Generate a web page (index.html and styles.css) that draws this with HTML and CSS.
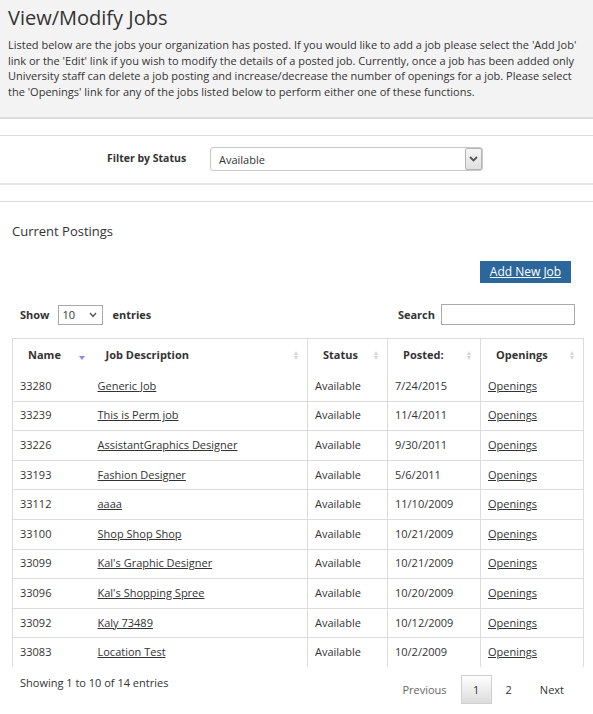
FILE: index.html
```html
<!DOCTYPE html>
<html>
<head>
<meta charset="utf-8">
<link rel="stylesheet" href="styles.css">
</head>
<body>
<header class="page-header">
  <h1 class="title">View/Modify Jobs</h1>
  <p class="intro">Listed below are the jobs your organization has posted. If you would like to add a job please select the 'Add Job' link or the 'Edit' link if you wish to modify the details of a posted job. Currently, once a job has been added only University staff can delete a job posting and increase/decrease the number of openings for a job. Please select the 'Openings' link for any of the jobs listed below to perform either one of these functions.</p>
</header>

<section class="filter">
  <label class="filter-label">Filter by Status</label>
  <div class="select">
    <span class="select-value">Available</span>
    <span class="select-arrow"><svg width="9" height="6" viewBox="0 0 9 6"><path d="M1 1 L4.5 4.5 L8 1" fill="none" stroke="#555" stroke-width="1.8"/></svg></span>
  </div>
</section>

<div class="divider"></div>

<h2 class="postings-title">Current Postings</h2>

<div class="actions">
  <a class="btn-primary" href="#">Add New Job</a>
</div>

<div class="table-controls">
  <div class="length">
    <span class="ctl-label">Show</span>
    <div class="mini-select"><span>10</span><svg width="8" height="6" viewBox="0 0 8 6"><path d="M1 1 L4 4.5 L7 1" fill="none" stroke="#555" stroke-width="1.4"/></svg></div>
    <span class="ctl-label">entries</span>
  </div>
  <div class="search">
    <span class="ctl-label">Search</span>
    <div class="search-input"></div>
  </div>
</div>

<table class="jobs">
  <thead>
    <tr>
      <th class="c-name">Name<span class="sort-active"></span></th>
      <th class="c-desc">Job Description<span class="sort"></span></th>
      <th class="c-status sep">Status<span class="sort"></span></th>
      <th class="c-posted sep">Posted:<span class="sort"></span></th>
      <th class="c-open sep">Openings<span class="sort"></span></th>
    </tr>
  </thead>
  <tbody>
    <tr><td>33280</td><td><a href="#">Generic Job</a></td><td class="sep">Available</td><td class="sep">7/24/2015</td><td class="sep"><a href="#">Openings</a></td></tr>
    <tr><td>33239</td><td><a href="#">This is Perm job</a></td><td class="sep">Available</td><td class="sep">11/4/2011</td><td class="sep"><a href="#">Openings</a></td></tr>
    <tr><td>33226</td><td><a href="#">AssistantGraphics Designer</a></td><td class="sep">Available</td><td class="sep">9/30/2011</td><td class="sep"><a href="#">Openings</a></td></tr>
    <tr><td>33193</td><td><a href="#">Fashion Designer</a></td><td class="sep">Available</td><td class="sep">5/6/2011</td><td class="sep"><a href="#">Openings</a></td></tr>
    <tr><td>33112</td><td><a href="#">aaaa</a></td><td class="sep">Available</td><td class="sep">11/10/2009</td><td class="sep"><a href="#">Openings</a></td></tr>
    <tr><td>33100</td><td><a href="#">Shop Shop Shop</a></td><td class="sep">Available</td><td class="sep">10/21/2009</td><td class="sep"><a href="#">Openings</a></td></tr>
    <tr><td>33099</td><td><a href="#">Kal's Graphic Designer</a></td><td class="sep">Available</td><td class="sep">10/21/2009</td><td class="sep"><a href="#">Openings</a></td></tr>
    <tr><td>33096</td><td><a href="#">Kal's Shopping Spree</a></td><td class="sep">Available</td><td class="sep">10/20/2009</td><td class="sep"><a href="#">Openings</a></td></tr>
    <tr><td>33092</td><td><a href="#">Kaly 73489</a></td><td class="sep">Available</td><td class="sep">10/12/2009</td><td class="sep"><a href="#">Openings</a></td></tr>
    <tr><td>33083</td><td><a href="#">Location Test</a></td><td class="sep">Available</td><td class="sep">10/2/2009</td><td class="sep"><a href="#">Openings</a></td></tr>
  </tbody>
</table>

<div class="table-footer">
  <div class="info">Showing 1 to 10 of 14 entries</div>
  <div class="pager">
    <span class="page-link muted">Previous</span>
    <span class="page-link current">1</span>
    <span class="page-link">2</span>
    <span class="page-link">Next</span>
  </div>
</div>
</body>
</html>
```

FILE: styles.css
```css
* { box-sizing: border-box; }
html, body { margin: 0; padding: 0; background: #fff; }
body {
  font-family: "Open Sans", "DejaVu Sans", sans-serif;
  font-size: 11px;
  color: #333;
}
a { color: #333; }

.page-header {
  background: #f3f3f3;
  padding: 4px 8px 0;
  height: 119px;
  border-bottom: 2px solid #dcdcdc;
}
.title {
  margin: 0;
  font-size: 20px;
  font-weight: 400;
  line-height: 28px;
  color: #333;
}
.intro {
  margin: 5px 0 0;
  font-size: 11px;
  line-height: 15.7px;
}

.filter {
  margin-top: 16px;
  border-top: 1px solid #dcdcdc;
  border-bottom: 2px solid #e4e4e4;
  height: 50px;
  display: flex;
  align-items: center;
  padding-left: 107px;
}
.filter-label {
  font-weight: 700;
  font-size: 10.5px;
  width: 103px;
  margin-top: -4px;
}
.select {
  width: 273px;
  height: 24px;
  border: 1px solid #c8c8c8;
  border-radius: 3px;
  display: flex;
  align-items: center;
  justify-content: space-between;
  padding-left: 8px;
  background: #fff;
  margin-top: -1px;
}
.select-value { font-size: 11px; }
.select-arrow {
  width: 17px;
  height: 22px;
  border: 1px solid #b5b5b5;
  background: linear-gradient(#f6f6f6, #e0e0e0);
  display: flex;
  align-items: center;
  justify-content: center;
  border-radius: 2px;
}

.divider {
  margin-top: 16px;
  border-top: 1px solid #dcdcdc;
}

.postings-title {
  margin: 19px 0 0 12px;
  font-size: 13px;
  font-weight: 400;
  line-height: 20px;
}

.actions {
  display: flex;
  justify-content: flex-end;
  padding-right: 22px;
  margin-top: 20px;
}
.btn-primary {
  background: #2b679a;
  color: #fff;
  font-size: 12px;
  line-height: 22px;
  height: 22px;
  width: 91px;
  text-align: center;
}

.table-controls {
  display: flex;
  justify-content: space-between;
  align-items: center;
  padding: 0 18px 0 20px;
  margin-top: 21px;
  height: 21px;
}
.length, .search { display: flex; align-items: center; }
.ctl-label { font-weight: 700; font-size: 11px; }
.mini-select {
  width: 45px;
  height: 20px;
  border: 1px solid #aaa;
  margin: 0 10px 0 8px;
  display: flex;
  align-items: center;
  justify-content: space-between;
  padding: 0 5px 0 4px;
  font-size: 11px;
}
.search-input {
  width: 134px;
  height: 21px;
  border: 1px solid #aaa;
  margin-left: 6px;
}

.jobs {
  margin: 13px 10px 0 12px;
  width: 571px;
  border-collapse: collapse;
  table-layout: fixed;
  border-top: 1px solid #dcdcdc;
  border-left: 1px solid #dcdcdc;
  border-right: 1px solid #dcdcdc;
}
.jobs th {
  position: relative;
  text-align: left;
  font-weight: 700;
  font-size: 11px;
  height: 33px;
  padding: 0 0 2px 15px;
}
.jobs td {
  height: 29.6px;
  padding: 0 0 2px 7px;
  font-size: 11px;
}
.jobs tbody tr + tr td { border-top: 1px solid #dcdcdc; }
.jobs .sep { border-left: 1px solid #dcdcdc; }
.c-name { width: 78px; }
.c-desc { width: 217px; }
.c-status { width: 80px; }
.c-posted { width: 93px; }
.c-open { width: 103px; }

.sort {
  position: absolute;
  right: 8px;
  top: 12px;
  width: 5px;
  height: 10px;
}
.sort::before, .sort::after {
  content: "";
  position: absolute;
  left: 0;
  border-left: 2.5px solid transparent;
  border-right: 2.5px solid transparent;
}
.sort::before { top: 0; border-bottom: 4px solid #d6d6d6; }
.sort::after { top: 5px; border-top: 4px solid #d6d6d6; }
.sort-active {
  position: absolute;
  right: 6px;
  top: 17px;
  border-left: 3px solid transparent;
  border-right: 3px solid transparent;
  border-top: 4px solid #8a8ae8;
}

.table-footer {
  display: flex;
  justify-content: space-between;
  align-items: flex-start;
  padding: 8px 15px 0 20px;
}
.info { font-size: 11px; line-height: 16px; }
.pager { display: flex; align-items: center; }
.page-link {
  font-size: 11px;
  padding: 0 13px;
  height: 29px;
  line-height: 28px;
  border: 1px solid transparent;
}
.page-link.muted { color: #666; }
.page-link.current {
  width: 31px;
  text-align: center;
  padding: 0;
  border: 1px solid #cfcfcf;
  background: linear-gradient(#fff, #dcdcdc);
  color: #333;
}
```
